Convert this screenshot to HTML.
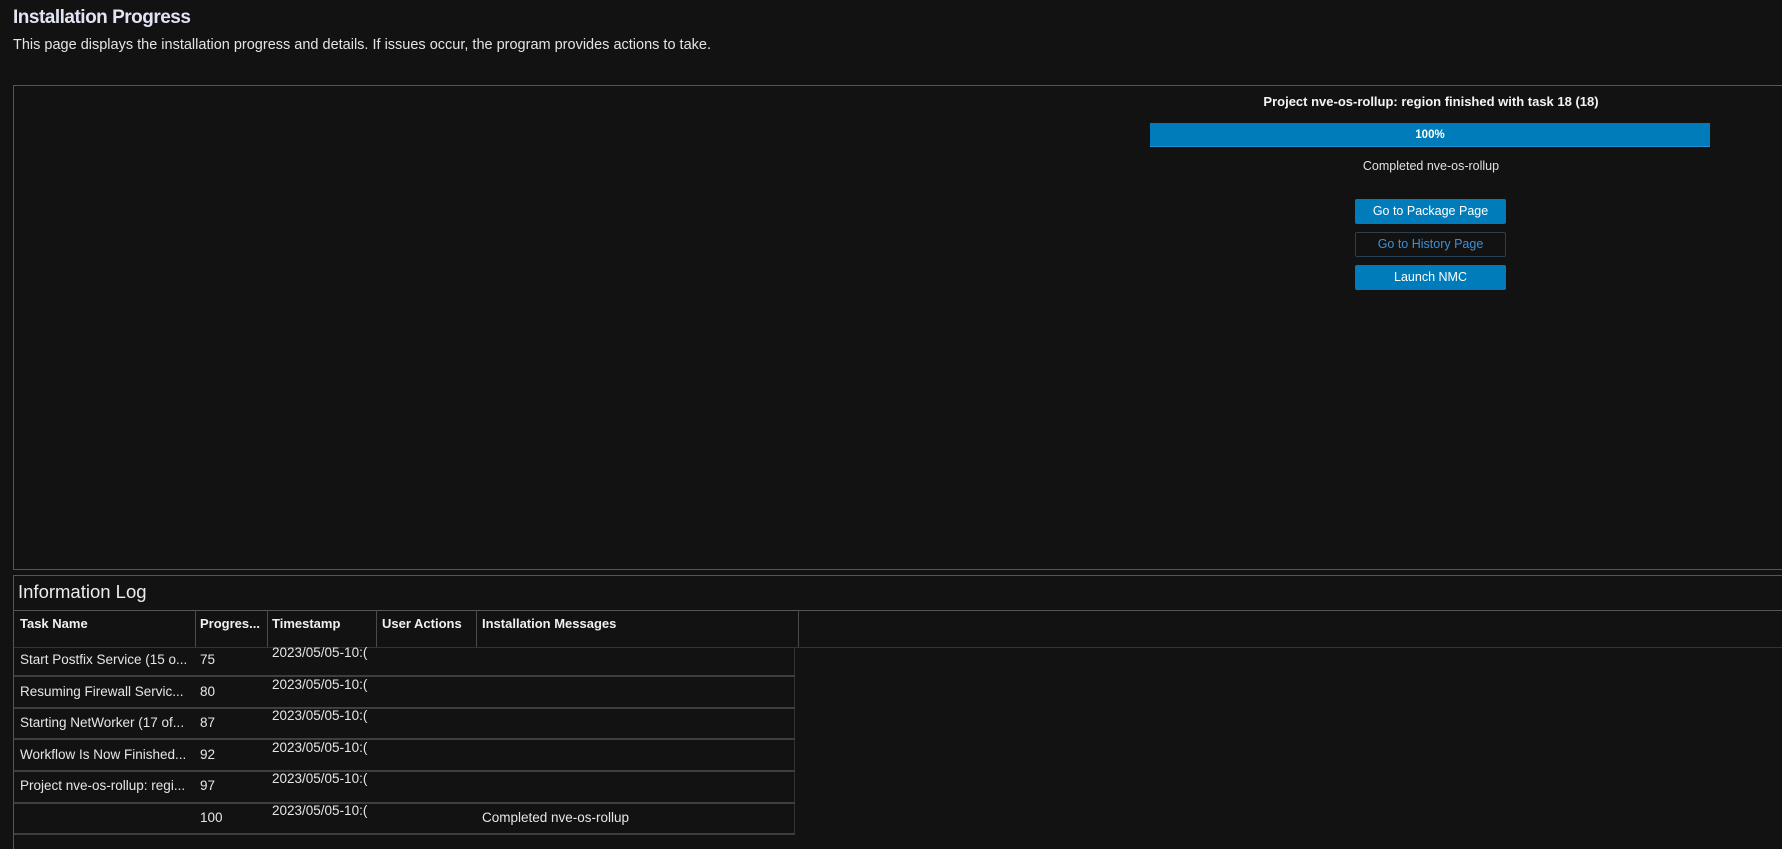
<!DOCTYPE html>
<html><head><meta charset="utf-8"><style>
*{margin:0;padding:0;box-sizing:border-box}
html,body{width:1782px;height:849px;overflow:hidden}
body{background:#121212;font-family:"Liberation Sans",sans-serif;color:#e6e6e6;position:relative}
.a{position:absolute;white-space:nowrap}
.btn{position:absolute;left:1355px;width:151px;height:25px;border-radius:2px;font-size:12.5px;text-align:center;line-height:25px;background:#007cbb;color:#fff}
.hl{position:absolute;background:#555;height:1px}
.vl{position:absolute;background:#4a4a4a;width:1px}
.th{position:absolute;top:616px;font-size:13px;font-weight:bold;color:#f0f0f0}
.td{position:absolute;font-size:13.5px;color:#e6e6e6}
</style></head><body>
<div class="a" style="left:13px;top:7px;font-size:19px;font-weight:bold;color:#e2e4f6;letter-spacing:-0.5px">Installation Progress</div>
<div class="a" style="left:13px;top:37px;font-size:14.5px;color:#e4e4e4">This page displays the installation progress and details. If issues occur, the program provides actions to take.</div>

<div style="position:absolute;left:13px;top:85px;width:1780px;height:485px;border:1px solid #555"></div>
<div class="a" style="left:1131px;width:600px;text-align:center;top:94px;font-size:13px;font-weight:bold;color:#f4f4f4">Project nve-os-rollup: region finished with task 18 (18)</div>
<div style="position:absolute;left:1150px;top:123px;width:560px;height:24px;background:#007cbb;border-bottom:1px solid #2a8fd0;color:#fff;font-size:11.5px;font-weight:bold;text-align:center;line-height:24px">100%</div>
<div class="a" style="left:1131px;width:600px;text-align:center;top:159px;font-size:12.5px;color:#e0e0e0">Completed nve-os-rollup</div>
<div class="btn" style="top:199px">Go to Package Page</div>
<div class="btn" style="top:232px;background:#121212;border:1px solid #2b3f52;color:#3d8fd6;line-height:23px">Go to History Page</div>
<div class="btn" style="top:265px">Launch NMC</div>

<div style="position:absolute;left:13px;top:575px;width:1780px;height:274px;border:1px solid #555;border-bottom:none"></div>
<div class="a" style="left:18px;top:581px;font-size:18.5px;color:#ececec">Information Log</div>
<div class="hl" style="left:14px;top:610px;width:1768px"></div>
<div class="hl" style="left:14px;top:647px;width:1768px;background:#333"></div>
<div class="vl" style="left:195px;top:610px;height:37px"></div>
<div class="vl" style="left:267px;top:610px;height:37px"></div>
<div class="vl" style="left:376px;top:610px;height:37px"></div>
<div class="vl" style="left:476px;top:610px;height:37px"></div>
<div class="vl" style="left:798px;top:610px;height:37px"></div>
<div class="th" style="left:20px">Task Name</div>
<div class="th" style="left:200px">Progres...</div>
<div class="th" style="left:272px">Timestamp</div>
<div class="th" style="left:382px">User Actions</div>
<div class="th" style="left:482px">Installation Messages</div>

<div style="position:absolute;left:14px;top:647px;width:781px;height:187px;border-right:1px solid #333"></div>
<div class="hl" style="left:14px;top:675px;width:781px;height:2px;background:#3e3e3e"></div>
<div class="hl" style="left:14px;top:707px;width:781px;height:2px;background:#3e3e3e"></div>
<div class="hl" style="left:14px;top:738px;width:781px;height:2px;background:#3e3e3e"></div>
<div class="hl" style="left:14px;top:770px;width:781px;height:2px;background:#3e3e3e"></div>
<div class="hl" style="left:14px;top:802px;width:781px;height:2px;background:#3e3e3e"></div>
<div class="hl" style="left:14px;top:833px;width:781px;height:2px;background:#3e3e3e"></div>

<div class="td" style="left:20px;top:652px">Start Postfix Service (15 o...</div><div class="td" style="left:200px;top:652px">75</div><div class="td" style="left:272px;top:645px">2023/05/05-10:(</div>
<div class="td" style="left:20px;top:684px">Resuming Firewall Servic...</div><div class="td" style="left:200px;top:684px">80</div><div class="td" style="left:272px;top:677px">2023/05/05-10:(</div>
<div class="td" style="left:20px;top:715px">Starting NetWorker (17 of...</div><div class="td" style="left:200px;top:715px">87</div><div class="td" style="left:272px;top:708px">2023/05/05-10:(</div>
<div class="td" style="left:20px;top:747px">Workflow Is Now Finished...</div><div class="td" style="left:200px;top:747px">92</div><div class="td" style="left:272px;top:740px">2023/05/05-10:(</div>
<div class="td" style="left:20px;top:778px">Project nve-os-rollup: regi...</div><div class="td" style="left:200px;top:778px">97</div><div class="td" style="left:272px;top:771px">2023/05/05-10:(</div>
<div class="td" style="left:200px;top:810px">100</div><div class="td" style="left:272px;top:803px">2023/05/05-10:(</div><div class="td" style="left:482px;top:810px">Completed nve-os-rollup</div>
</body></html>
